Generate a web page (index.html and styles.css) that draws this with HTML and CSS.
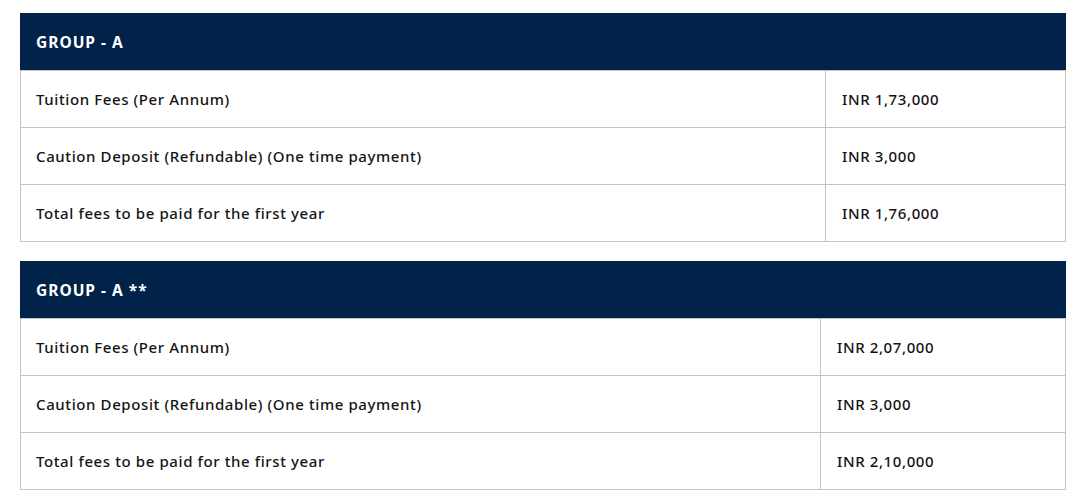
FILE: index.html
```html
<!DOCTYPE html>
<html lang="en">
<head>
<meta charset="utf-8">
<title>Fees</title>
<link rel="stylesheet" href="styles.css">
</head>
<body>
<div class="wrap">
  <table class="fees fees-a">
    <colgroup><col class="col-label"><col class="col-val"></colgroup>
    <thead>
      <tr><th colspan="2">GROUP - A</th></tr>
    </thead>
    <tbody>
      <tr><td>Tuition Fees (Per Annum)</td><td>INR 1,73,000</td></tr>
      <tr><td>Caution Deposit (Refundable) (One time payment)</td><td>INR 3,000</td></tr>
      <tr><td>Total fees to be paid for the first year</td><td>INR 1,76,000</td></tr>
    </tbody>
  </table>
  <table class="fees fees-b">
    <colgroup><col class="col-label"><col class="col-val"></colgroup>
    <thead>
      <tr><th colspan="2">GROUP - A **</th></tr>
    </thead>
    <tbody>
      <tr><td>Tuition Fees (Per Annum)</td><td>INR 2,07,000</td></tr>
      <tr><td>Caution Deposit (Refundable) (One time payment)</td><td>INR 3,000</td></tr>
      <tr><td>Total fees to be paid for the first year</td><td>INR 2,10,000</td></tr>
    </tbody>
  </table>
</div>
</body>
</html>
```
FILE: styles.css
```css
html, body {
  margin: 0;
  padding: 0;
  background: #ffffff;
}
body {
  font-family: "Noto Sans", "Open Sans", Arial, sans-serif;
  color: #141414;
}
.wrap {
  padding: 13px 25px 0 20px;
  display: flex;
  flex-direction: column;
  gap: 19px;
}
.fees {
  width: 100%;
  border-collapse: collapse;
  table-layout: fixed;
}
.fees th {
  background: #012249;
  color: #ffffff;
  text-align: left;
  font-weight: 700;
  font-size: 15.5px;
  letter-spacing: 1px;
  height: 57px;
  padding: 0 15px;
  border: 1px solid #012249;
  border-bottom: 1px solid #c4c4c4;
  box-sizing: border-box;
}
.fees td {
  font-size: 15px;
  font-weight: 500;
  letter-spacing: 0.6px;
  height: 57px;
  padding: 0 16px 0 15px;
  border: 1px solid #c4c4c4;
  box-sizing: border-box;
}
.fees td + td {
  padding-left: 16px;
}
.fees-a .col-val { width: 240px; }
.fees-b .col-val { width: 245px; }
```
